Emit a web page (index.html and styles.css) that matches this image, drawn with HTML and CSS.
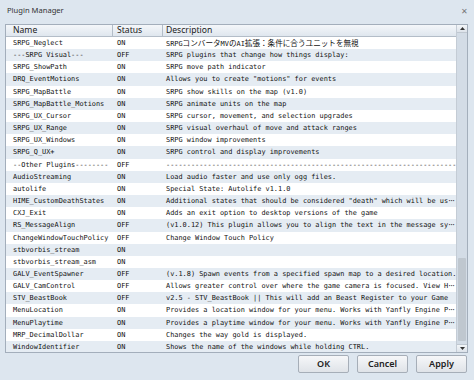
FILE: index.html
```html
<!DOCTYPE html>
<html>
<head>
<meta charset="utf-8">
<link rel="stylesheet" href="styles.css">
</head>
<body>
<div class="window">
  <div class="titlebar">
    <span class="title">Plugin Manager</span>
    <span class="close">&#x2715;</span>
  </div>
  <div class="listview">
    <div class="table">
      <div class="header">
        <div class="hcell hname">Name</div>
        <div class="hcell hstatus">Status</div>
        <div class="hcell hdesc">Description</div>
      </div>
      <div class="body">
        <div class="row"><span class="c">SRPG_Neglect</span><span class="c">ON</span><span class="c">SRPG<span class="jp">コンバータ</span>MV<span class="jp">の</span>AI<span class="jp">拡張：条件に合うユニットを無視</span></span></div>
        <div class="row"><span class="c">---SRPG Visual---</span><span class="c">OFF</span><span class="c">SRPG plugins that change how things display:</span></div>
        <div class="row"><span class="c">SRPG_ShowPath</span><span class="c">ON</span><span class="c">SRPG move path indicator</span></div>
        <div class="row"><span class="c">DRQ_EventMotions</span><span class="c">ON</span><span class="c">Allows you to create "motions" for events</span></div>
        <div class="row"><span class="c">SRPG_MapBattle</span><span class="c">ON</span><span class="c">SRPG show skills on the map (v1.0)</span></div>
        <div class="row"><span class="c">SRPG_MapBattle_Motions</span><span class="c">ON</span><span class="c">SRPG animate units on the map</span></div>
        <div class="row"><span class="c">SRPG_UX_Cursor</span><span class="c">ON</span><span class="c">SRPG cursor, movement, and selection upgrades</span></div>
        <div class="row"><span class="c">SRPG_UX_Range</span><span class="c">ON</span><span class="c">SRPG visual overhaul of move and attack ranges</span></div>
        <div class="row"><span class="c">SRPG_UX_Windows</span><span class="c">ON</span><span class="c">SRPG window improvements</span></div>
        <div class="row"><span class="c">SRPG_Q_UX+</span><span class="c">ON</span><span class="c">SRPG control and display improvements</span></div>
        <div class="row"><span class="c">--Other Plugins--------</span><span class="c">OFF</span><span class="c">----------------------------------------------------------------------</span></div>
        <div class="row"><span class="c">AudioStreaming</span><span class="c">ON</span><span class="c">Load audio faster and use only ogg files.</span></div>
        <div class="row"><span class="c">autolife</span><span class="c">ON</span><span class="c">Special State: Autolife v1.1.0</span></div>
        <div class="row"><span class="c">HIME_CustomDeathStates</span><span class="c">ON</span><span class="c">Additional states that should be considered "death" which will be us<span class="ell">···</span></span></div>
        <div class="row"><span class="c">CXJ_Exit</span><span class="c">ON</span><span class="c">Adds an exit option to desktop versions of the game</span></div>
        <div class="row"><span class="c">RS_MessageAlign</span><span class="c">OFF</span><span class="c">(v1.0.12) This plugin allows you to align the text in the message sy<span class="ell">···</span></span></div>
        <div class="row"><span class="c">ChangeWindowTouchPolicy</span><span class="c">OFF</span><span class="c">Change Window Touch Policy</span></div>
        <div class="row"><span class="c">stbvorbis_stream</span><span class="c">ON</span><span class="c"></span></div>
        <div class="row"><span class="c">stbvorbis_stream_asm</span><span class="c">ON</span><span class="c"></span></div>
        <div class="row"><span class="c">GALV_EventSpawner</span><span class="c">OFF</span><span class="c">(v.1.8) Spawn events from a specified spawn map to a desired location.</span></div>
        <div class="row"><span class="c">GALV_CamControl</span><span class="c">OFF</span><span class="c">Allows greater control over where the game camera is focused. View H<span class="ell">···</span></span></div>
        <div class="row"><span class="c">STV_BeastBook</span><span class="c">OFF</span><span class="c">v2.5 - STV_BeastBook || This will add an Beast Register to your Game</span></div>
        <div class="row"><span class="c">MenuLocation</span><span class="c">ON</span><span class="c">Provides a location window for your menu. Works with Yanfly Engine P<span class="ell">···</span></span></div>
        <div class="row"><span class="c">MenuPlaytime</span><span class="c">ON</span><span class="c">Provides a playtime window for your menu. Works with Yanfly Engine P<span class="ell">···</span></span></div>
        <div class="row"><span class="c">MRP_DecimalDollar</span><span class="c">ON</span><span class="c">Changes the way gold is displayed.</span></div>
        <div class="row"><span class="c">WindowIdentifier</span><span class="c">ON</span><span class="c">Shows the name of the windows while holding CTRL.</span></div>
      </div>
    </div>
    <div class="scrollbar">
      <div class="sbtn"><svg width="5" height="3" viewBox="0 0 5 3"><path d="M0 3 L2.5 0 L5 3 Z" fill="#333"/></svg></div>
      <div class="sgap"></div>
      <div class="thumb"></div>
      <div class="sfill"></div>
      <div class="sbtn"><svg width="5" height="3" viewBox="0 0 5 3"><path d="M0 0 L2.5 3 L5 0 Z" fill="#333"/></svg></div>
    </div>
  </div>
  <div class="buttons">
    <div class="btn">OK</div>
    <div class="btn">Cancel</div>
    <div class="btn">Apply</div>
  </div>
</div>
</body>
</html>
```
FILE: styles.css
```css
html, body {
  margin: 0;
  padding: 0;
}
body {
  width: 474px;
  height: 380px;
  overflow: hidden;
  background: #dde6ef;
  font-family: "Noto Sans", "Open Sans", sans-serif;
  color: #1e1e1e;
}
.window {
  display: flex;
  flex-direction: column;
  height: 380px;
}
.titlebar {
  height: 24px;
  box-sizing: border-box;
  padding: 4px 6px 0 7px;
  display: flex;
  justify-content: space-between;
  align-items: flex-start;
}
.title {
  font-size: 7.6px;
  line-height: 12px;
  color: #333;
}
.close {
  font-size: 8px;
  line-height: 14px;
  color: #777;
  font-weight: 300;
}
.listview {
  margin: 0 6px 0 5px;
  height: 329px;
  box-sizing: border-box;
  border: 1px solid #a3aebb;
  background: #fff;
  display: flex;
}
.table {
  flex: 1;
  min-width: 0;
  display: flex;
  flex-direction: column;
}
.header {
  height: 12px;
  box-sizing: border-box;
  display: grid;
  grid-template-columns: 106px 50px 1fr;
  background: linear-gradient(#f4f7fa, #dfe6ee);
  border-bottom: 1px solid #b3bdc8;
}
.hcell {
  font-size: 8.6px;
  line-height: 11px;
  color: #1a1a1a;
  white-space: nowrap;
}
.hname { padding-left: 7px; }
.hstatus { padding-left: 4px; border-left: 1px solid #b3bdc8; }
.hdesc { padding-left: 3px; border-left: 1px solid #b3bdc8; }
.body {
  flex: 1;
  overflow: hidden;
  font-family: "DejaVu Sans Mono", monospace;
  font-size: 6.9px;
  color: #111;
}
.row {
  height: 12.16px;
  display: grid;
  grid-template-columns: 106px 50px 1fr;
  align-items: center;
  line-height: 12.16px;
}
.row:nth-child(even) {
  background: #e5ecf3;
}
.c {
  white-space: nowrap;
  overflow: hidden;
}
.c:nth-child(1) { padding-left: 7px; }
.c:nth-child(2) { padding-left: 5px; }
.c:nth-child(3) { padding-left: 4px; }
.ell {
  letter-spacing: -2.1px;
  margin-left: -0.6px;
}
.jp {
  font-family: "Noto Sans CJK JP", sans-serif;
  font-size: 7.6px;
}
.scrollbar {
  width: 10px;
  border-left: 1px solid #c4ccd5;
  background: #d3dce6;
  display: flex;
  flex-direction: column;
}
.sbtn {
  height: 7px;
  display: flex;
  align-items: center;
  justify-content: center;
  background: linear-gradient(#f2f5f8, #dde3ea);
  border-bottom: 1px solid #c0c8d1;
}
.sbtn:last-child {
  border-bottom: 0;
  border-top: 1px solid #c0c8d1;
}
.sgap {
  height: 225px;
}
.thumb {
  height: 83px;
  background: #bfc7cf;
  border-radius: 1px;
  margin: 0 1px;
}
.sfill {
  flex: 1;
}
.buttons {
  display: flex;
  justify-content: flex-end;
  gap: 8px;
  padding: 2px 7px 0 0;
}
.btn {
  width: 51px;
  height: 18px;
  box-sizing: border-box;
  border: 1px solid #a6aeb8;
  border-radius: 2px;
  background: linear-gradient(#f6f7f9, #dfe3e8);
  font-size: 9px;
  font-weight: 600;
  line-height: 16px;
  text-align: center;
  color: #222;
}
```
